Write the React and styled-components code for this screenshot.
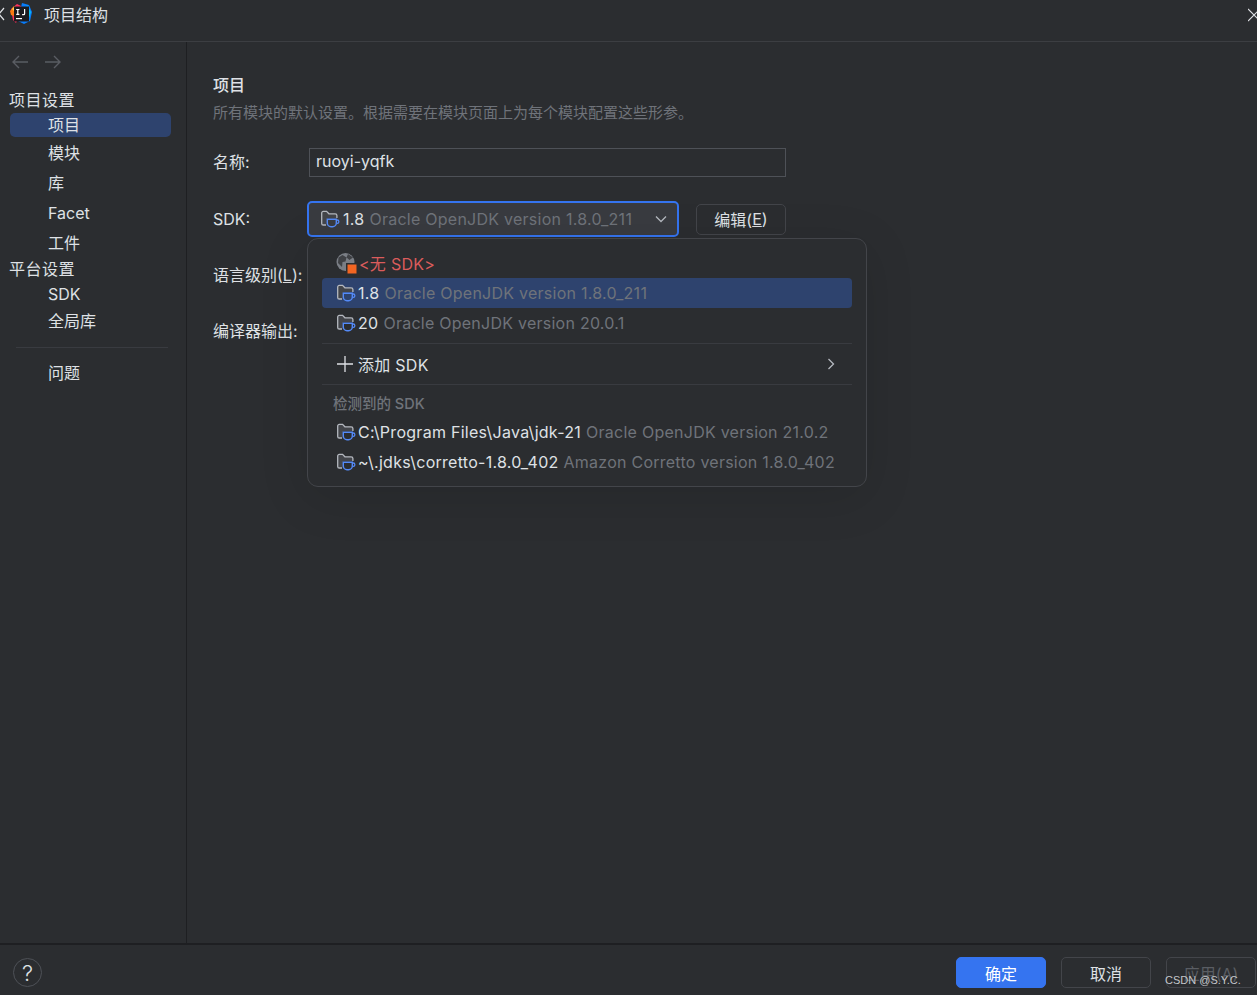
import React from "react";
import styled, { createGlobalStyle } from "styled-components";

const Global = createGlobalStyle`
    html, body { margin: 0; padding: 0; height: 100%; overflow: hidden; }
    body {
        background: #2b2d30;
        font-family: Inter, "Noto Sans CJK SC", sans-serif;
        font-size: 16px;
        color: #dfe1e5;
    }
`

const Frame = styled.div`
    position: relative;
    width: 1257px;
    height: 995px;
    display: flex;
    flex-direction: column;
    overflow: hidden;
`

const TitleBar = styled.div`
    height: 28px;
    flex: none;
    display: flex;
    align-items: center;
    border-bottom: 1px solid #3c3e42;
    padding-bottom: 13px;
    box-sizing: content-box;
`

const BackCut = styled.svg`
    width: 5px;
    height: 14px;
    margin-right: 4px;
    flex: none;
`

const Title = styled.div`
    margin-left: 12px;
    font-size: 16px;
    color: #dfe1e5;
`

const Close = styled.svg`
    width: 9px;
    height: 14px;
    margin-left: auto;
    margin-top: 2px;
`

const Body = styled.div`
    flex: 1;
    display: flex;
    min-height: 0;
`

const Sidebar = styled.div`
    width: 187px;
    flex: none;
    box-sizing: border-box;
    border-right: 1px solid #1e1f22;
    padding: 6px 15px 0 0;
`

const Nav = styled.div`
    display: flex;
    gap: 13px;
    padding-left: 12px;
    height: 28px;
    align-items: center;
    margin-bottom: 12px;
`

const Group = styled.div`
    height: ${p => p.$h}px;
    line-height: ${p => p.$h}px;
    padding-left: 9px;
    letter-spacing: 0.5px;
    color: #dfe1e5;
`

const Item = styled.div`
    height: ${p => p.$h}px;
    line-height: ${p => p.$h}px;
    margin: 0 0 ${p => p.$active ? 1 : 0}px 10px;
    padding-left: 38px;
    border-radius: 5px;
    background: ${p => p.$active ? "#2e436e" : "transparent"};
    color: #dfe1e5;
`

const SideRule = styled.div`
    height: 1px;
    margin: 13px 3px 11px 16px;
    background: #393b40;
`

const Content = styled.div`
    flex: 1;
    padding: 32px 0 0 26px;
`

const Heading = styled.div`
    font-size: 16px;
    line-height: 22px;
    font-weight: 500;
    color: #dfe1e5;
`

const Hint = styled.div`
    margin-top: 6px;
    font-size: 15px;
    line-height: 22px;
    color: #6f737a;
`

const Row = styled.div`
    display: flex;
    align-items: center;
    height: ${p => p.$h || 30}px;
    margin-top: ${p => p.$mt}px;
`

const Label = styled.div`
    width: 96px;
    flex: none;
    white-space: nowrap;
    padding-bottom: ${p => p.$lift || 0}px;
    color: #dfe1e5;
`

const NameInput = styled.div`
    width: 477px;
    height: 29px;
    box-sizing: border-box;
    border: 1px solid #4e5157;
    background: #2b2d30;
    padding-left: 6px;
    line-height: 25px;
    color: #dfe1e5;
`

const Select = styled.div`
    width: 372px;
    height: 36px;
    margin-left: -2px;
    box-sizing: border-box;
    border: 2px solid #3574f0;
    border-radius: 5px;
    background: #393b40;
    display: flex;
    align-items: center;
    padding: 0 10px 0 11px;
    white-space: nowrap;
`

const Muted = styled.span`
    color: #6f737a;
    margin-left: 5px;
    letter-spacing: 0.25px;
`

const Chevron = styled.svg`
    width: 12px;
    height: 8px;
    margin-left: auto;
`

const Button = styled.div`
    box-sizing: border-box;
    width: ${p => p.$w}px;
    height: 31px;
    border-radius: 5px;
    border: 1px solid ${p => p.$primary ? "#3574f0" : "#43454a"};
    background: ${p => p.$primary ? "#3574f0" : "transparent"};
    color: ${p => p.$off ? "#5a5d63" : p.$primary ? "#fff" : "#dfe1e5"};
    display: flex;
    align-items: center;
    justify-content: center;
`

const EditButton = styled(Button)`
    margin-left: 17px;
`

const Popup = styled.div`
    position: absolute;
    left: 307px;
    top: 238px;
    width: 560px;
    height: 249px;
    box-sizing: border-box;
    border: 1px solid #43454a;
    border-radius: 11px;
    background: #2b2d30;
    box-shadow: 0 10px 50px rgba(0, 0, 0, 0.12);
    padding: 9px 14px 0;
`

const Option = styled.div`
    height: 30px;
    border-radius: 4px;
    background: ${p => p.$active ? "#2e436e" : "transparent"};
    display: flex;
    align-items: center;
    padding-left: 14px;
    white-space: nowrap;
    color: ${p => p.$red ? "#db5c5c" : "#dfe1e5"};
    margin-top: ${p => p.$mt || 0}px;
`

const OptionText = styled.span`
    margin-left: 2px;
    letter-spacing: 0.27px;
`

const SelectValue = styled(OptionText)`
    margin-left: 3px;
`

const Arrow = styled.svg`
    width: 8px;
    height: 12px;
    margin-left: auto;
    margin-right: 17px;
`

const PopupRule = styled.div`
    height: 1px;
    background: #393b40;
    margin-top: ${p => p.$mt}px;
`

const Caption = styled.div`
    font-size: 14.5px;
    line-height: 20px;
    margin: 9px 0 3px 11px;
    color: #6f737a;
    font-weight: 500;
`

const Footer = styled.div`
    height: 52px;
    flex: none;
    box-sizing: border-box;
    border-top: 2px solid #1e1f22;
    display: flex;
    align-items: center;
    padding: 0 1px 0 13px;
    gap: 15px;
`

const Help = styled.div`
    width: 29px;
    height: 29px;
    box-sizing: border-box;
    border: 1px solid #4e5157;
    border-radius: 50%;
    display: flex;
    align-items: center;
    justify-content: center;
    margin-right: auto;
    margin-top: 5px;
    font-size: 22px;
    font-weight: 300;
    color: #dfe1e5;
`

const FootButton = styled(Button)`
    margin-top: 5px;
`

const Watermark = styled.div`
    position: absolute;
    left: 1165px;
    top: 973px;
    font-family: "Liberation Sans", sans-serif;
    font-size: 11px;
    line-height: 14px;
    color: #c4c6ca;
    white-space: nowrap;
`

const FolderCup = () => (
    <svg width="20" height="18" viewBox="0 0 20 18" fill="none" style={{ flex: "none" }}>
        <path d="M1.700 14.500V3A1.600 1.600 0 0 1 3.300 1.400h3.300l2.300 2.400h6.200a1.800 1.800 0 0 1 1.800 1.800V8H7v6.500z" fill="#43454a" />
        <path d="M6 15H3.300a1.600 1.600 0 0 1-1.600-1.600V3A1.600 1.600 0 0 1 3.300 1.400h3.300l2.300 2.400h6.200a1.800 1.800 0 0 1 1.800 1.800V8" stroke="#b4b8bf" strokeWidth="1.300" />
        <path d="M7.300 9.200h9v3.800a3.700 3.700 0 0 1-3.700 3.700h-1.600A3.700 3.700 0 0 1 7.300 13z" stroke="#548af7" strokeWidth="1.400" />
        <path d="M16.300 10h.9a1.600 1.600 0 0 1 0 3.300h-.9" stroke="#548af7" strokeWidth="1.300" />
    </svg>
)

const NoSdk = () => (
    <svg width="21" height="21" viewBox="0 0 21 21" fill="none" style={{ flex: "none" }}>
        <circle cx="9.500" cy="9" r="9" fill="#7a7e85" />
        <path d="M2.500 4.500l4-2.500 4 2.500-1 4-3 .5-.5 5L2 10zM12 1l5 3.500-3.500 2.500-3-2.500z" fill="#3f4145" />
        <rect x="10" y="10" width="11" height="11" fill="#2b2d30" />
        <rect x="11.500" y="11.500" width="9" height="9" fill="#f26522" />
    </svg>
)

const Logo = () => (
    <svg width="22" height="22" viewBox="0 0 22 22" style={{ flex: "none", marginLeft: 1 }}>
        <path d="M1 6l6-5 6 3-7 16-3-3z" fill="#fe315d" />
        <path d="M0 8l4-5 3 6-3 4-3-1z" fill="#f97a12" />
        <path d="M2 6l3-3 2 3-3 2z" fill="#ffd24d" />
        <path d="M12 0l7 2 3 7-2 9-6 3-6-3z" fill="#087cfa" />
        <path d="M17 2l4 7-2 6-3-9z" fill="#07c3f2" />
        <rect x="4" y="3.500" width="15" height="15" fill="#1b1b1f" />
        <rect x="6" y="15" width="6" height="1.200" fill="#fff" />
        <path d="M6.200 6h3.200v1H8.400v3.800h1V12H6.200v-1.200h1V7H6.200zM14 6h1.200v4.800a1.500 1.500 0 0 1-1.500 1.500h-1.600v-1.200h1.400a.5.5 0 0 0 .5-.5z" fill="#fff" />
    </svg>
)

const sideItems = [
    { type: "group", label: "项目设置", h: 25 },
    { type: "item", label: "项目", h: 24, active: true },
    { type: "item", label: "模块", h: 30 },
    { type: "item", label: "库", h: 30 },
    { type: "item", label: "Facet", h: 30 },
    { type: "item", label: "工件", h: 30 },
    { type: "group", label: "平台设置", h: 22 },
    { type: "item", label: "SDK", h: 28 },
    { type: "item", label: "全局库", h: 26 },
]

const App = () => {
    return (
        <Frame>
            <Global />
            <TitleBar>
                <BackCut viewBox="0 0 5 14"><path d="M4 1L-1 7l5 6" stroke="#dfe1e5" strokeWidth="1.200" fill="none" /></BackCut>
                <Logo />
                <Title>项目结构</Title>
                <Close viewBox="0 0 9 14"><path d="M0 1l12 12M0 13L12 1" stroke="#dfe1e5" strokeWidth="1.200" fill="none" /></Close>
            </TitleBar>
            <Body>
                <Sidebar>
                    <Nav>
                        <svg width="18" height="14" viewBox="0 0 18 14" fill="none"><path d="M1 7h15M7 1L1 7l6 6" stroke="#5a5d63" strokeWidth="1.400" /></svg>
                        <svg width="18" height="14" viewBox="0 0 18 14" fill="none"><path d="M17 7H2M11 1l6 6-6 6" stroke="#5a5d63" strokeWidth="1.400" /></svg>
                    </Nav>
                    {sideItems.map(it => it.type === "group"
                        ? <Group key={it.label} $h={it.h}>{it.label}</Group>
                        : <Item key={it.label} $h={it.h} $active={it.active}>{it.label}</Item>)}
                    <SideRule />
                    <Item $h={28}>问题</Item>
                </Sidebar>
                <Content>
                    <Heading>项目</Heading>
                    <Hint>所有模块的默认设置。根据需要在模块页面上为每个模块配置这些形参。</Hint>
                    <Row $mt={23}>
                        <Label $lift={3}>名称:</Label>
                        <NameInput>ruoyi-yqfk</NameInput>
                    </Row>
                    <Row $mt={24} $h={36}>
                        <Label>SDK:</Label>
                        <Select>
                            <FolderCup />
                            <SelectValue>1.8</SelectValue>
                            <Muted>Oracle OpenJDK version 1.8.0_211</Muted>
                            <Chevron viewBox="0 0 12 8"><path d="M1 1.500l5 5 5-5" stroke="#b4b8bf" strokeWidth="1.300" fill="none" /></Chevron>
                        </Select>
                        <EditButton $w={90}>编辑(<u>E</u>)</EditButton>
                    </Row>
                    <Row $mt={22}>
                        <Label>语言级别(<u>L</u>):</Label>
                    </Row>
                    <Row $mt={26}>
                        <Label>编译器输出:</Label>
                    </Row>
                </Content>
            </Body>
            <Footer>
                <Help>?</Help>
                <FootButton $w={90} $primary>确定</FootButton>
                <FootButton $w={90}>取消</FootButton>
                <FootButton $w={90} $off>应用(A)</FootButton>
            </Footer>
            <Popup>
                <Option $red>
                    <NoSdk />
                    <OptionText>&lt;无 SDK&gt;</OptionText>
                </Option>
                <Option $active>
                    <FolderCup />
                    <OptionText>1.8</OptionText>
                    <Muted>Oracle OpenJDK version 1.8.0_211</Muted>
                </Option>
                <Option>
                    <FolderCup />
                    <OptionText>20</OptionText>
                    <Muted>Oracle OpenJDK version 20.0.1</Muted>
                </Option>
                <PopupRule $mt={5} />
                <Option $mt={5}>
                    <svg width="20" height="18" viewBox="0 0 20 18" fill="none" style={{ flex: "none" }}><path d="M9 1v16M1 9h16" stroke="#dfe1e5" strokeWidth="1.300" /></svg>
                    <OptionText>添加 SDK</OptionText>
                    <Arrow viewBox="0 0 8 12"><path d="M1.500 1l5 5-5 5" stroke="#b4b8bf" strokeWidth="1.300" fill="none" /></Arrow>
                </Option>
                <PopupRule $mt={5} />
                <Caption>检测到的 SDK</Caption>
                <Option>
                    <FolderCup />
                    <OptionText>C:\Program Files\Java\jdk-21</OptionText>
                    <Muted>Oracle OpenJDK version 21.0.2</Muted>
                </Option>
                <Option>
                    <FolderCup />
                    <OptionText>~\.jdks\corretto-1.8.0_402</OptionText>
                    <Muted>Amazon Corretto version 1.8.0_402</Muted>
                </Option>
            </Popup>
            <Watermark>CSDN @S.Y.C.</Watermark>
        </Frame>
    )
}

export default App
